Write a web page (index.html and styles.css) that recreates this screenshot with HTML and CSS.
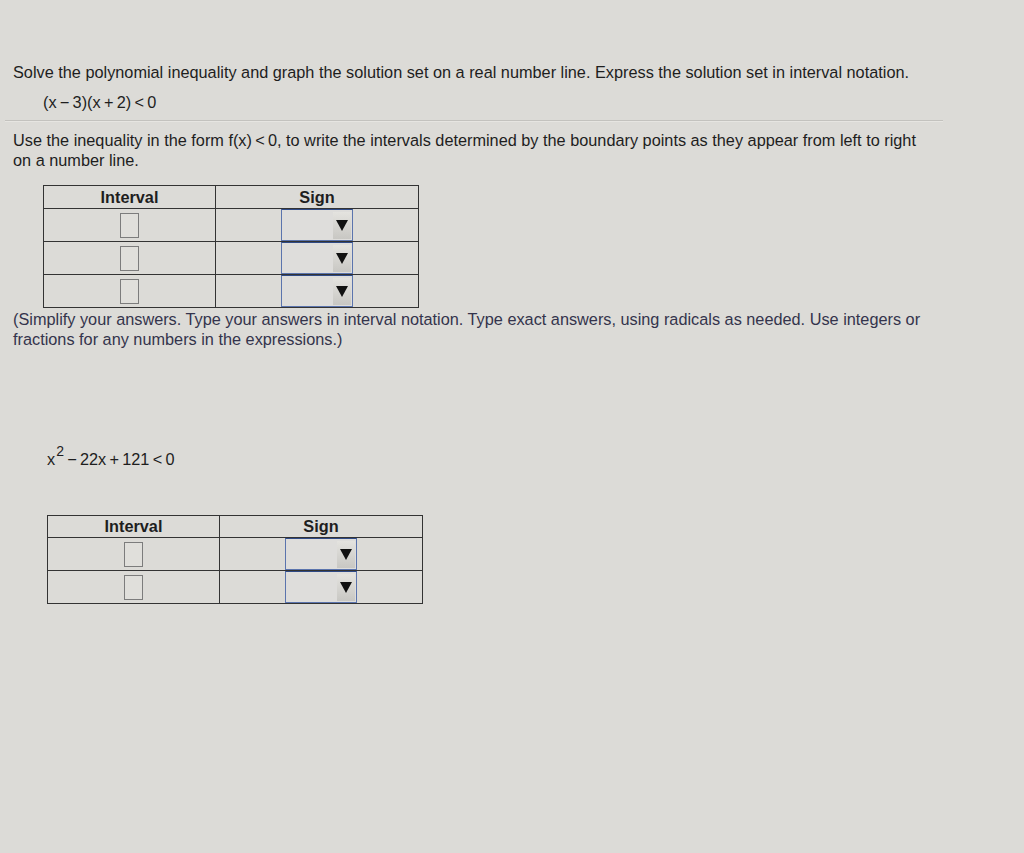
FILE: index.html
```html
<!DOCTYPE html>
<html>
<head>
<meta charset="utf-8">
<link rel="stylesheet" href="styles.css">
</head>
<body>
<div class="page">
  <p class="prompt">Solve the polynomial inequality and graph the solution set on a real number line. Express the solution set in interval notation.</p>
  <p class="eq eq1">(x&thinsp;&minus;&thinsp;3)(x&thinsp;+&thinsp;2)&thinsp;&lt;&thinsp;0</p>
  <hr class="sep">
  <p class="instr">Use the inequality in the form f(x)&thinsp;&lt;&thinsp;0, to write the intervals determined by the boundary points as they appear from left to right on a number line.</p>
  <table class="grid grid1">
    <tr><th class="c1">Interval</th><th>Sign</th></tr>
    <tr><td class="c1"><span class="box"></span></td><td><span class="sel"><span class="btn"><svg class="arr" viewBox="0 0 12 11"><path d="M0 0H12L6 11Z"/></svg></span></span></td></tr>
    <tr><td class="c1"><span class="box"></span></td><td><span class="sel"><span class="btn"><svg class="arr" viewBox="0 0 12 11"><path d="M0 0H12L6 11Z"/></svg></span></span></td></tr>
    <tr><td class="c1"><span class="box"></span></td><td><span class="sel"><span class="btn"><svg class="arr" viewBox="0 0 12 11"><path d="M0 0H12L6 11Z"/></svg></span></span></td></tr>
  </table>
  <p class="note">(Simplify your answers. Type your answers in interval notation. Type exact answers, using radicals as needed. Use integers or fractions for any numbers in the expressions.)</p>
  <p class="eq eq2">x<sup>2</sup>&thinsp;&minus;&thinsp;22x&thinsp;+&thinsp;121&thinsp;&lt;&thinsp;0</p>
  <table class="grid grid2">
    <tr><th class="c1">Interval</th><th>Sign</th></tr>
    <tr><td class="c1"><span class="box"></span></td><td><span class="sel"><span class="btn"><svg class="arr" viewBox="0 0 12 11"><path d="M0 0H12L6 11Z"/></svg></span></span></td></tr>
    <tr><td class="c1"><span class="box"></span></td><td><span class="sel"><span class="btn"><svg class="arr" viewBox="0 0 12 11"><path d="M0 0H12L6 11Z"/></svg></span></span></td></tr>
  </table>
</div>
</body>
</html>
```
FILE: styles.css
```css
html, body {
  margin: 0;
  padding: 0;
  background: #dcdbd7;
}
body {
  font-family: "Liberation Sans", Arial, sans-serif;
  font-size: 16.3px;
  color: #1e1e1e;
  width: 1024px;
  height: 853px;
  overflow: hidden;
}
.page {
  padding: 62px 0 0 13px;
}
p {
  margin: 0;
  line-height: 20px;
}
.eq {
  white-space: nowrap;
}
.eq1 {
  margin-top: 10px;
  padding-left: 30px;
}
.sep {
  border: 0;
  border-top: 1px solid #c3c2be;
  border-bottom: 1px solid #e6e5e1;
  margin: 8px 0 0 -8px;
  width: 938px;
  height: 0;
}
.instr {
  margin-top: 8px;
  width: 915px;
}
.grid {
  border-collapse: collapse;
  margin-top: 15px;
  margin-left: 30px;
  width: 376px;
}
.grid th, .grid td {
  border: 1px solid #333;
  padding: 0;
  text-align: center;
  vertical-align: middle;
}
.grid th {
  height: 22px;
  font-weight: bold;
  font-size: 16.3px;
  line-height: 22px;
}
.grid td {
  height: 31px;
}
.grid .c1 {
  width: 171px;
}
.box {
  display: inline-block;
  width: 17px;
  height: 23px;
  border: 1px solid #7c7c7c;
  background: #e0dfdb;
  vertical-align: middle;
}
.sel {
  display: flex;
  justify-content: flex-end;
  align-items: center;
  width: 70px;
  height: 30px;
  margin: 0 auto;
  border: 1px solid #5b74ad;
  border-top: 1px solid #2f4a86;
  background: #dedddb;
}
.btn {
  display: flex;
  align-items: center;
  justify-content: center;
  width: 18px;
  height: 27px;
  margin-right: 1px;
  background: linear-gradient(#e4e3df, #c8c7c3);
}
.arr {
  width: 12px;
  height: 11px;
  fill: #111;
}
.note {
  margin-top: 1px;
  color: #34344c;
  width: 930px;
}
.eq2 {
  margin-top: 100px;
  padding-left: 34px;
}
.eq2 sup {
  font-size: 14px;
  vertical-align: baseline;
  line-height: 0;
  margin-left: 1px;
  display: inline-block;
  transform: translateY(-9px);
}
.grid2 {
  margin-top: 46px;
  margin-left: 34px;
}
.grid2 th {
  height: 21px;
  line-height: 21px;
}
```
